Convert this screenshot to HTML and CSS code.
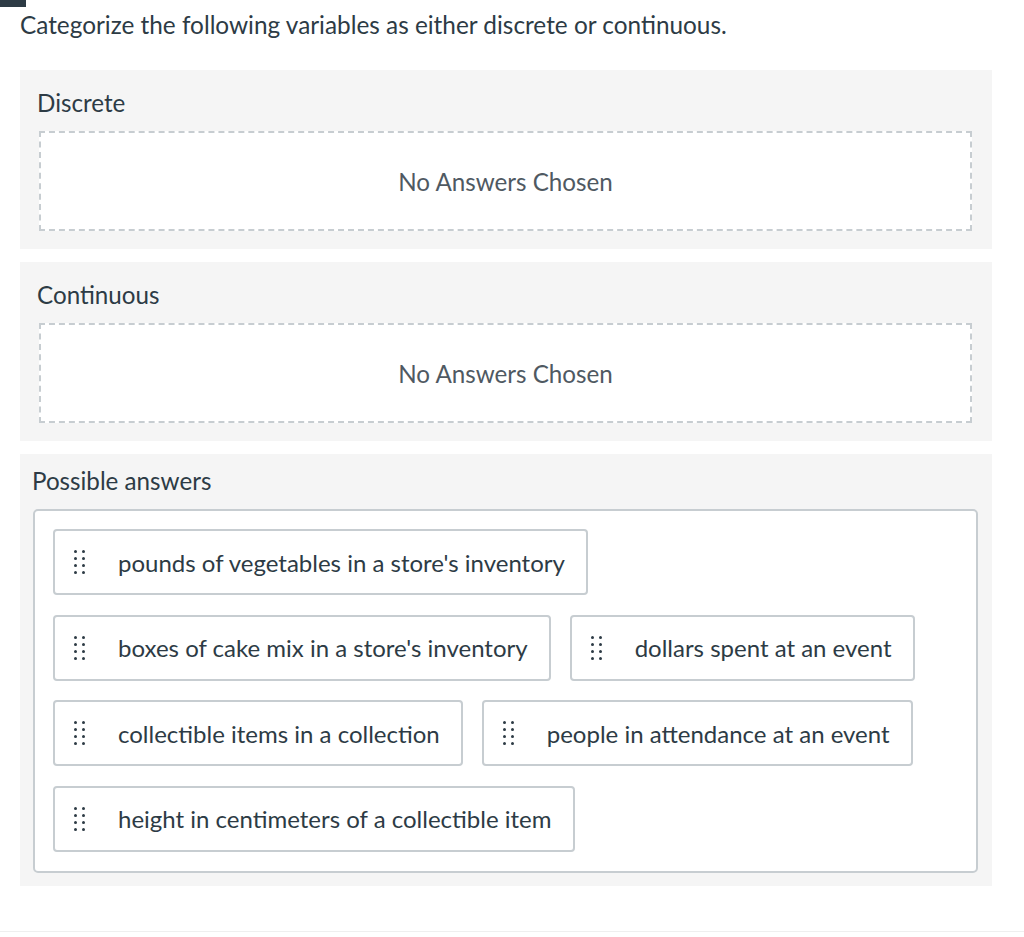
FILE: index.html
```html
<!DOCTYPE html>
<html>
<head>
<meta charset="utf-8">
<link rel="stylesheet" href="styles.css">
</head>
<body>
<div class="topbar"></div>
<h1 class="title">Categorize the following variables as either discrete or continuous.</h1>

<section class="panel">
  <div class="label">Discrete</div>
  <div class="dropzone">No Answers Chosen</div>
</section>

<section class="panel">
  <div class="label">Continuous</div>
  <div class="dropzone">No Answers Chosen</div>
</section>

<section class="panel answers">
  <div class="label">Possible answers</div>
  <div class="pool">
    <div class="chip"><svg class="grip" width="11" height="24" viewBox="0 0 11 24"><g fill="#2d3b45"><circle cx="1.5" cy="1.5" r="1.5"/><circle cx="9.5" cy="1.5" r="1.5"/><circle cx="1.5" cy="8.5" r="1.5"/><circle cx="9.5" cy="8.5" r="1.5"/><circle cx="1.5" cy="15.5" r="1.5"/><circle cx="9.5" cy="15.5" r="1.5"/><circle cx="1.5" cy="22.5" r="1.5"/><circle cx="9.5" cy="22.5" r="1.5"/></g></svg><span>pounds of vegetables in a store's inventory</span></div>
    <div class="chip"><svg class="grip" width="11" height="24" viewBox="0 0 11 24"><g fill="#2d3b45"><circle cx="1.5" cy="1.5" r="1.5"/><circle cx="9.5" cy="1.5" r="1.5"/><circle cx="1.5" cy="8.5" r="1.5"/><circle cx="9.5" cy="8.5" r="1.5"/><circle cx="1.5" cy="15.5" r="1.5"/><circle cx="9.5" cy="15.5" r="1.5"/><circle cx="1.5" cy="22.5" r="1.5"/><circle cx="9.5" cy="22.5" r="1.5"/></g></svg><span>boxes of cake mix in a store's inventory</span></div>
    <div class="chip"><svg class="grip" width="11" height="24" viewBox="0 0 11 24"><g fill="#2d3b45"><circle cx="1.5" cy="1.5" r="1.5"/><circle cx="9.5" cy="1.5" r="1.5"/><circle cx="1.5" cy="8.5" r="1.5"/><circle cx="9.5" cy="8.5" r="1.5"/><circle cx="1.5" cy="15.5" r="1.5"/><circle cx="9.5" cy="15.5" r="1.5"/><circle cx="1.5" cy="22.5" r="1.5"/><circle cx="9.5" cy="22.5" r="1.5"/></g></svg><span>dollars spent at an event</span></div>
    <div class="chip"><svg class="grip" width="11" height="24" viewBox="0 0 11 24"><g fill="#2d3b45"><circle cx="1.5" cy="1.5" r="1.5"/><circle cx="9.5" cy="1.5" r="1.5"/><circle cx="1.5" cy="8.5" r="1.5"/><circle cx="9.5" cy="8.5" r="1.5"/><circle cx="1.5" cy="15.5" r="1.5"/><circle cx="9.5" cy="15.5" r="1.5"/><circle cx="1.5" cy="22.5" r="1.5"/><circle cx="9.5" cy="22.5" r="1.5"/></g></svg><span>collectible items in a collection</span></div>
    <div class="chip"><svg class="grip" width="11" height="24" viewBox="0 0 11 24"><g fill="#2d3b45"><circle cx="1.5" cy="1.5" r="1.5"/><circle cx="9.5" cy="1.5" r="1.5"/><circle cx="1.5" cy="8.5" r="1.5"/><circle cx="9.5" cy="8.5" r="1.5"/><circle cx="1.5" cy="15.5" r="1.5"/><circle cx="9.5" cy="15.5" r="1.5"/><circle cx="1.5" cy="22.5" r="1.5"/><circle cx="9.5" cy="22.5" r="1.5"/></g></svg><span>people in attendance at an event</span></div>
    <div class="chip"><svg class="grip" width="11" height="24" viewBox="0 0 11 24"><g fill="#2d3b45"><circle cx="1.5" cy="1.5" r="1.5"/><circle cx="9.5" cy="1.5" r="1.5"/><circle cx="1.5" cy="8.5" r="1.5"/><circle cx="9.5" cy="8.5" r="1.5"/><circle cx="1.5" cy="15.5" r="1.5"/><circle cx="9.5" cy="15.5" r="1.5"/><circle cx="1.5" cy="22.5" r="1.5"/><circle cx="9.5" cy="22.5" r="1.5"/></g></svg><span>height in centimeters of a collectible item</span></div>
  </div>
</section>

<div class="footer-line"></div>
</body>
</html>
```

FILE: styles.css
```css
html, body {
  margin: 0;
  padding: 0;
  background: #ffffff;
}
body {
  font-family: Lato, "Liberation Sans", sans-serif;
  color: #2d3b45;
  font-size: 24.2px;
  line-height: 29px;
}
.topbar {
  width: 26px;
  height: 7px;
  background: #2d3b45;
}
.title {
  margin: 3px 0 31px 20px;
  font-size: 24.35px;
  line-height: 29px;
  font-weight: 400;
}
.panel {
  margin: 0 32px 13px 20px;
  background: #f5f5f5;
  padding: 18px 20px 18px 19px;
}
.label {
  margin-bottom: 14px;
  margin-left: -2px;
}
.dropzone {
  height: 96px;
  border: 2px dashed #c7cdd1;
  background: #ffffff;
  display: flex;
  align-items: center;
  justify-content: center;
  color: #4f5962;
}
.panel.answers {
  padding: 12px 14px 13px 13px;
}
.panel.answers .label {
  margin-left: -1px;
}
.pool {
  background: #ffffff;
  border: 2px solid #c7cdd1;
  border-radius: 5px;
  padding: 18px 18px 19px 18px;
  display: flex;
  flex-wrap: wrap;
  gap: 19.5px 19px;
}
.chip {
  display: flex;
  align-items: center;
  border: 2px solid #c7cdd1;
  border-radius: 4px;
  background: #ffffff;
  height: 62px;
  padding: 0 21px 0 19px;
  white-space: nowrap;
  font-size: 24px;
}
.grip {
  flex: none;
  margin-right: 33px;
}
.footer-line {
  margin-top: 45px;
  border-top: 1px solid #efefef;
}
```
